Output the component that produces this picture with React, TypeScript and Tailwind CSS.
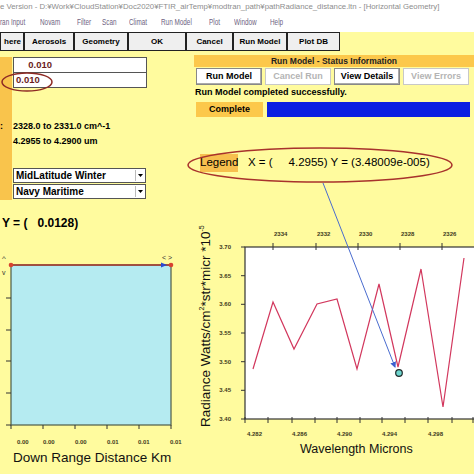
const menuItems: [string, string][] = [
  ['ran Input', 'w-[40px]'],
  ['Novam', 'w-[37px]'],
  ['Filter', 'w-[25px]'],
  ['Scan', 'w-[27px]'],
  ['Climat', 'w-[32px]'],
  ['Run Model', 'w-[48px]'],
  ['Plot', 'w-[25px]'],
  ['Window', 'w-[36px]'],
  ['Help', 'w-[30px]'],
]

const toolButtons: [string, string][] = [
  ['here', 'w-[24px] justify-end pr-[2px]'],
  ['Aerosols', 'w-[50px] justify-center'],
  ['Geometry', 'w-[54px] justify-center'],
  ['OK', 'w-[58px] justify-center'],
  ['Cancel', 'w-[47px] justify-center'],
  ['Run Model', 'w-[54px] justify-center'],
  ['Plot DB', 'w-[53px] justify-center'],
]

const statusButtons: [string, boolean][] = [
  ['Run Model', true],
  ['Cancel Run', false],
  ['View Details', true],
  ['View Errors', false],
]

// radiance samples, already in chart pixels
const radiance: [number, number][] = [
  [61, 169], [81, 102], [102, 149], [125, 104], [145, 99], [165, 169],
  [187, 84], [206, 167], [229, 69], [251, 207], [272, 58],
]

const yTicks: [string, number][] = [
  ['3.70', 47], ['3.65', 75.7], ['3.60', 104.3], ['3.55', 133],
  ['3.50', 161.7], ['3.45', 190.3], ['3.40', 219],
]

function Dropdown({ label }: { label: string }) {
  return (
    <div className="flex h-[15px] w-[133px] items-center justify-between border border-[#555] bg-white">
      <span className="pl-[2px] text-[10px] font-bold leading-none text-black">{label}</span>
      <div className="mr-[1px] flex h-[11px] w-[9px] items-center justify-center border-l border-[#bbb]">
        <svg width="5" height="3" viewBox="0 0 5 3">
          <polygon points="0,0 5,0 2.5,3" fill="#000" />
        </svg>
      </div>
    </div>
  )
}

function RangeChart() {
  const ticks = [11, 43, 75, 107, 139, 171]
  const labels: [string, number][] = [['0.00', 17], ['0.00', 43], ['0.00', 75], ['0.01', 107], ['0.01', 138], ['0.01', 170]]
  return (
    <svg width="192" height="224" className="block">
      <rect x="11" y="15" width="160" height="160" fill="#b5ebf1" stroke="#4e5b48" strokeWidth="1.2" />
      <line x1="11" y1="15" x2="171" y2="15" stroke="#a8392e" strokeWidth="1.6" />
      {[48, 80, 111, 143, 175].map((y) => (
        <line key={y} x1="6" y1={y} x2="11" y2={y} stroke="#333" strokeWidth="1" />
      ))}
      {ticks.map((x) => (
        <line key={x} x1={x} y1="175" x2={x} y2="179" stroke="#333" strokeWidth="1" />
      ))}
      <circle cx="11" cy="15" r="2.3" fill="#d8432f" />
      <circle cx="171" cy="15" r="2.3" fill="#d8432f" />
      <polygon points="161,12.5 167,15 161,17.5" fill="#2b4bd0" />
      <text x="2" y="11" fontSize="8" fill="#333">^</text>
      <text x="2" y="25" fontSize="7" fill="#333">v</text>
      <text x="162" y="10" fontSize="7" fill="#333">{'< >'}</text>
      {labels.map(([t, x], i) => (
        <text key={i} x={x} y="194" fontSize="6" fontWeight="700" fill="#3d3a20">{t}</text>
      ))}
      <text x="13" y="212" fontSize="13.5" fill="#111">Down Range Distance Km</text>
    </svg>
  )
}

function RadianceChart() {
  const bottomTicks = [53, 76, 100, 123, 145, 168, 190, 213, 236, 260, 281]
  const bottomLabels: [string, number][] = [['4.282', 55], ['4.286', 100], ['4.290', 145], ['4.294', 190], ['4.298', 236]]
  const topTicks: [string, number][] = [['2334', 81], ['2332', 124], ['2330', 166], ['2328', 208], ['2326', 250]]
  return (
    <svg width="282" height="274" className="block">
      <rect x="53" y="47" width="260" height="172" fill="#fff" stroke="#333" strokeWidth="1.2" />
      {yTicks.map(([t, y]) => (
        <g key={t}>
          <line x1="49" y1={y} x2="53" y2={y} stroke="#333" />
          <text x="39" y={y + 2} textAnchor="end" fontSize="6" fontWeight="700" fill="#3d3a20">{t}</text>
        </g>
      ))}
      {bottomTicks.map((x) => (
        <line key={x} x1={x} y1="217" x2={x} y2="223" stroke="#333" />
      ))}
      {bottomLabels.map(([t, x]) => (
        <text key={t} x={x} y="236" fontSize="6" fontWeight="700" fill="#3d3a20">{t}</text>
      ))}
      {topTicks.map(([t, x]) => (
        <g key={t}>
          <line x1={x} y1="43" x2={x} y2="50" stroke="#333" />
          <text x={x + 1} y="36" fontSize="6" fontWeight="700" fill="#3d3a20">{t}</text>
        </g>
      ))}
      <polyline
        points={radiance.map(([x, y]) => `${x},${y}`).join(' ')}
        fill="none"
        stroke="#d2375d"
        strokeWidth="1.2"
      />
      <circle cx="207" cy="173" r="3.3" fill="#6fd6cf" stroke="#1d2a2a" strokeWidth="1.2" />
      <text transform="translate(18,227) rotate(-90)" fontSize="13.5" fill="#111">
        Radiance Watts/cm<tspan fontSize="7" dy="-6">2</tspan>
        <tspan dy="6">*str*micr  *10</tspan>
        <tspan fontSize="7" dy="-6">-5</tspan>
      </text>
      <text x="108" y="253" fontSize="12.5" fill="#111">Wavelength Microns</text>
    </svg>
  )
}

export default function App() {
  return (
    <div className="relative h-[474px] w-[474px] overflow-hidden bg-[#fffb9e] font-['Liberation_Sans',Arial,sans-serif]">
      <div className="h-[14px] overflow-hidden whitespace-nowrap bg-white text-[7.8px] leading-[14px] text-[#8d8d8d]">
        e Version - D:¥Work¥CloudStation¥Doc2020¥FTIR_airTemp¥modtran_path¥pathRadiance_distance.ltn - [Horizontal Geometry]
      </div>
      <div className="flex h-[17px] items-center bg-white text-[8.5px] text-[#6e6382]">
        {menuItems.map(([t, w]) => (
          <div key={t} className={`${w} shrink-0 whitespace-nowrap`}>
            <span className="inline-block origin-left scale-x-75">{t}</span>
          </div>
        ))}
      </div>
      <div className="flex h-[19px] border-t border-white">
        {toolButtons.map(([t, cls]) => (
          <div
            key={t}
            className={`${cls} flex h-[19px] shrink-0 items-center border border-[#222] bg-[#efefef] text-[8px] font-bold text-black`}
          >
            {t}
          </div>
        ))}
      </div>

      <div className="flex">
        <div className="flex w-[192px] shrink-0 flex-col">
          <div className="mt-[7px] flex h-[143px] flex-col border-l-[12px] border-[#f9c44c]">
            <div className="ml-[1px] w-[134px] border border-[#555] bg-white text-[9.5px] font-bold text-[#6b1d1d]">
              <div className="flex h-[15px] items-center border-b border-[#555]">
                <span className="w-[38px] text-right">0.010</span>
              </div>
              <div className="flex h-[14px] items-center pl-[2px]">0.010</div>
            </div>
            <div className="-ml-[12px] mt-[31px] flex h-[15px] items-center text-[9px] font-bold text-black">
              <span className="w-[13px]">:</span>
              <span>2328.0 to 2331.0 cm^-1</span>
            </div>
            <div className="flex h-[15px] items-center pl-[1px] text-[9px] font-bold text-black">
              4.2955 to 4.2900 um
            </div>
            <div className="ml-[1px] mt-[19px] flex flex-col gap-[1px]">
              <Dropdown label="MidLatitude Winter" />
              <Dropdown label="Navy Maritime" />
            </div>
          </div>
          <div className="mt-[15px] h-[16px] whitespace-pre pl-[2px] text-[12px] font-bold leading-[16px] text-black">
            {'Y = (   0.0128)'}
          </div>
          <div className="mt-[19px]">
            <RangeChart />
          </div>
        </div>

        <div className="flex flex-1 flex-col">
          <div className="ml-[2px] mt-[5px] h-[12px] bg-[#fcc84b] text-center text-[8.5px] font-bold leading-[12px] text-[#222]">
            Run Model - Status Information
          </div>
          <div className="mt-[1px] flex gap-[3px] pl-[4px]">
            {statusButtons.map(([t, on]) => (
              <div
                key={t}
                className={
                  on
                    ? 'flex h-[17px] w-[66px] items-center justify-center border border-[#888] bg-white text-[9px] font-bold text-black shadow-[inset_-1px_-1px_0_#aaa]'
                    : 'flex h-[17px] w-[66px] items-center justify-center border border-[#c8c8c8] bg-white text-[9px] font-bold text-[#b4b4b4]'
                }
              >
                {t}
              </div>
            ))}
          </div>
          <div className="h-[15px] pl-[3px] text-[9px] font-bold leading-[15px] text-black">
            Run Model completed successfully.
          </div>
          <div className="mt-[2px] flex gap-[4px] pl-[4px]">
            <div className="flex h-[15px] w-[67px] items-center justify-center bg-[#fcc84b] text-[9px] font-bold text-black">
              Complete
            </div>
            <div className="h-[15px] w-[203px] bg-[#0b1fe2]" />
          </div>
          <div className="mt-[39px] flex h-[14px] items-center whitespace-pre pl-[8px] text-[11.5px] text-black">
            <span className="bg-[#f7c04e]">Legend</span>
            <span>{'   X = (     4.2955) Y = (3.48009e-005)'}</span>
          </div>
          <div className="mt-[30px]">
            <RadianceChart />
          </div>
        </div>
      </div>

      <svg className="pointer-events-none absolute inset-0" width="474" height="474">
        <defs>
          <marker id="ah" markerWidth="6" markerHeight="6" refX="5" refY="3" orient="auto">
            <polygon points="0,0 6,3 0,6" fill="#3c5fd0" />
          </marker>
        </defs>
        <ellipse cx="320" cy="165" rx="132" ry="17" fill="none" stroke="#a8322c" strokeWidth="1.5" />
        <ellipse cx="27" cy="82" rx="25" ry="9" fill="none" stroke="#8e2a24" strokeWidth="1.5" />
        <line x1="323" y1="183" x2="395" y2="367" stroke="#4a6ccf" strokeWidth="1" markerEnd="url(#ah)" />
      </svg>
    </div>
  )
}
